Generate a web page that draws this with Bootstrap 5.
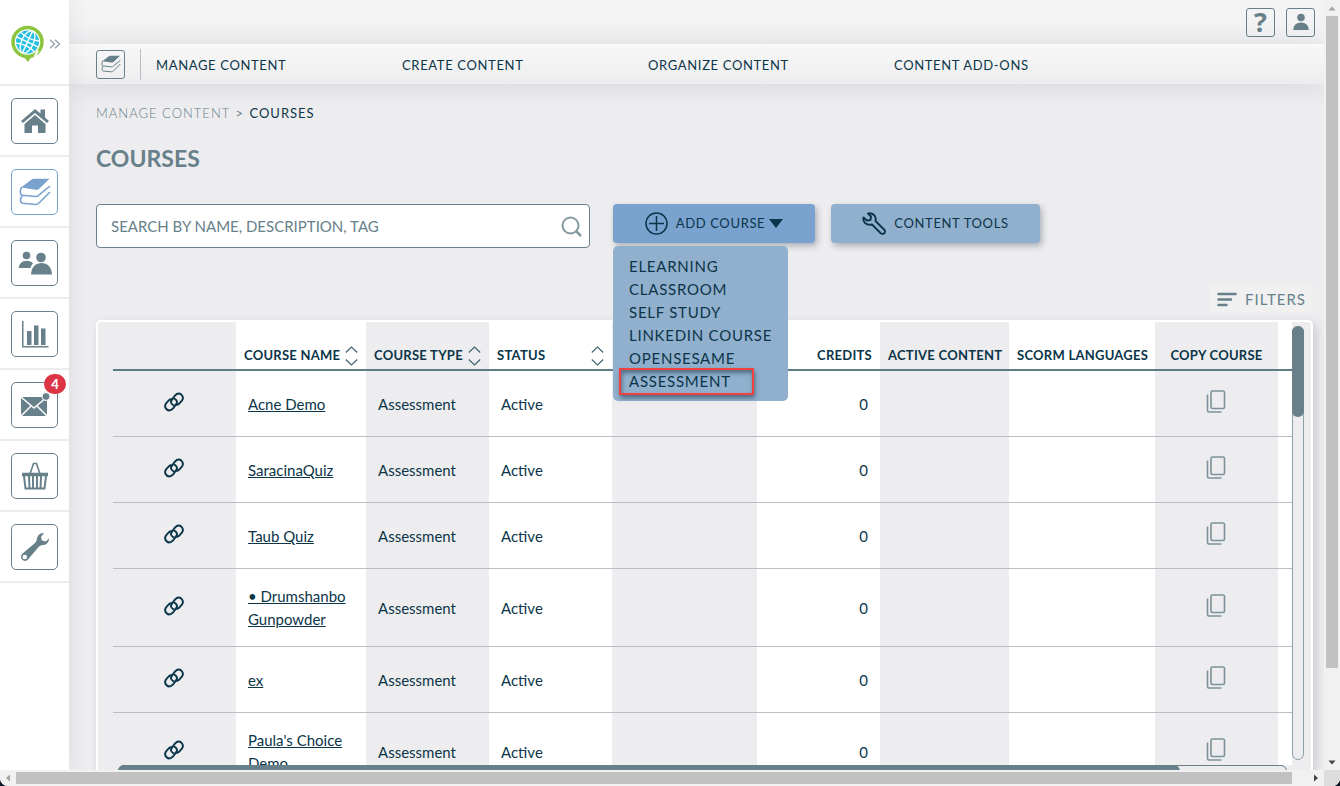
<!DOCTYPE html>
<html lang="en">
<head>
<meta charset="utf-8">
<meta name="viewport" content="width=device-width, initial-scale=1">
<title>Courses</title>
<link href="https://cdn.jsdelivr.net/npm/bootstrap@5.3.0/dist/css/bootstrap.min.css" rel="stylesheet">
<style>
:root { --slate: #67808a; --ink: #0b3548; --page: #ededef; --blue: #79a2ce; --soft: #91b0cd; }
body { font-family: Lato, "Liberation Sans", sans-serif; font-size: 15px; line-height: 23px; color: var(--ink); background: #0d1a2a; }
a { color: inherit; }
.shell { height: 100vh; border-radius: 0 0 8px 8px; background: var(--page); }
.side { width: 69px; background: #fff; box-shadow: 0 0 20px rgba(60,60,80,.09); z-index: 2; }
.brand { height: 86px; border-bottom: 2px solid #ebebed; padding: 0 8px 0 11px; }
.side-item { height: 71px; border-bottom: 2px solid #ededef; }
.tile { width: 47px; height: 46px; border: 1px solid var(--slate); border-radius: 5px; color: var(--slate); background: #fff; padding: 0; }
.tile.current { border-color: var(--blue); color: var(--blue); }
.small-tile { width: 29px; height: 29px; border: 1px solid var(--slate); border-radius: 3px; color: var(--slate); background: transparent; padding: 0; }
.help { font: bold 27px/24px "Open Sans", sans-serif; }
.count { top: -8px; right: -8px; width: 22px; height: 20px; border-radius: 10px; background: #dc3545; color: #fff; font-weight: 900; font-size: 13px; line-height: 20px; }
.utility { height: 44px; padding: 0 9px; gap: 11px; background: linear-gradient(#f4f4f5, #f1f1f3); }
.menu { height: 40px; padding-left: 27px; background: linear-gradient(#f8f8f8, #ededef); box-shadow: 0 2px 24px rgba(60,60,80,.12); font-size: 13px; letter-spacing: .05em; z-index: 1; }
.menu a { flex: 0 1 246px; text-decoration: none; padding-top: 2px; }
.menu .rule { height: 31px; border-left: 1px solid #b9bcc4; margin: 0 15px; }
.content { padding: 0 11px 0 27px; }
.crumbs { font-size: 13px; letter-spacing: 1px; line-height: 20px; margin-top: 19px; }
.crumbs a { font-weight: 300; text-decoration: none; color: var(--slate); }
.crumbs .sep { margin: 0 1px; color: var(--slate); }
h1 { font-size: 23px; line-height: 30px; font-weight: 700; color: var(--slate); margin: 20px 0 31px; }
.find { flex: 0 1 494px; height: 44px; border: 1px solid var(--slate); border-radius: 4px; background: #fff; padding: 0 7px 0 14px; margin-right: 23px; }
.find input { font-size: 15px; color: var(--slate); background: none; }
.find input::placeholder { color: var(--slate); opacity: 1; }
.act { height: 39px; border-radius: 4px; color: var(--ink); font-size: 13px; letter-spacing: .05em; box-shadow: 2px 3px 6px rgba(70,80,100,.4); border: 0; background: var(--soft); }
.act.open { background: var(--blue); width: 202px; }
.act.tools { width: 209px; }
.add-menu { display: block; top: 42px; left: 0; min-width: 175px; background: var(--soft); border: 0; border-radius: 5px; padding: 9px 16px 8px; z-index: 5; }
.add-menu a { display: block; white-space: nowrap; line-height: 23px; letter-spacing: .05em; text-decoration: none; color: var(--ink); }
.picked { position: relative; }
.picked::after { content: ""; position: absolute; inset: -2px 18px -2px -10px; border: 2px solid #f4413f; box-shadow: 1px 3px 4px rgba(20,40,60,.5), inset 1px 3px 4px rgba(20,40,60,.5); }
.filters { height: 26px; background: #f0f0f0; border: 0; color: var(--slate); letter-spacing: 1px; padding: 0 7px; margin: 38px 0 8px; }
.panel { border: 2px solid #fff; border-bottom: 0; border-radius: 5px 5px 0 0; background: var(--page); box-shadow: 3px 4px 10px rgba(60,60,80,.2); padding: 0 7px 0 15px; }
.grid { table-layout: fixed; min-width: 1100px; border-collapse: separate; border-spacing: 0; }
.grid th { height: 49px; vertical-align: bottom; padding: 0 0 2px 8px; border-bottom: 2px solid #5f7c88; font-size: 13px; letter-spacing: .02em; line-height: 23px; white-space: nowrap; }
.grid td { height: 66px; padding: 16px 12px 15px; vertical-align: middle; border-bottom: 1px solid #bcbec7; }
.grid .w { background: #fff; }
.grid .num { text-align: right; }
.grid th.num { padding-right: 8px; }
.grid th.mid { text-align: center; padding-left: 0; }
.grid td.mid { padding: 8px 2px 12px 0; }
.grid td svg { display: block; color: var(--ink); }
.grid td .copy { color: #7c929a; }
.grid button { border: 0; background: none; padding: 0; }
.sort { width: 13px; height: 20px; margin-right: 8px; }
.vbar { width: 12px; margin: 4px 0 5px; border: 1px solid #8ba0a9; border-radius: 6px; }
.vbar span { display: block; height: 91px; margin: -1px; background: var(--slate); border-radius: 6px; }
.hbar { height: 5px; margin: 0 17px 0 5px; overflow: hidden; }
.hbar div { height: 12px; border: 1px solid var(--slate); border-radius: 6px; background: var(--page); }
.hbar span { display: block; width: 91%; height: 12px; margin: -1px; background: var(--slate); border-radius: 6px; }
.scroll-y { width: 16px; background: #f1f1f1; z-index: 3; }
.scroll-y span { width: 12px; height: 84.7%; background: #c1c1c1; }
.scroll-x { height: 16px; background: #f1f1f1; z-index: 4; }
.scroll-x span { height: 12px; width: 98.8%; background: #c1c1c1; }
.corner { width: 16px; background: #dcdcdc; }
</style>
</head>
<body>
<svg width="0" height="0" class="d-none">
  <symbol id="books" viewBox="0 0 32 28"><path d="M12 2Q13.500 .8 15 .8H30.500L20.500 10.500Q19 12 17 11.700L2 9.500Z" fill="currentColor"/><path d="M2.500 9.500Q.8 12 1.500 15.500Q1.800 17 3.500 17.200L16.500 18.500Q18.500 18.500 19.800 17.200L30.500 8.500M3 18Q1 20.500 1.700 23.500Q2 25 4 25.300L16.500 26.500Q18.500 26.500 20 25L30.500 14.500" fill="none" stroke="currentColor" stroke-width="1.600" stroke-linecap="round"/></symbol>
  <symbol id="chain" viewBox="1 1 22 22"><g fill="none" stroke="currentColor" stroke-width="2.100" stroke-linecap="round"><path d="M12.500 8.300Q16.500 10.500 14.800 14L11 19Q7.500 22.800 3.900 20.100Q.8 17 3.300 13.500L6.500 10Q8.300 8.300 10 9.200"/><path d="M11.500 15.700Q7.500 13.500 9.200 10L13 5Q16.500 1.200 20.100 3.900Q23.200 7 20.700 10.500L17.500 14Q15.700 15.700 14 14.800"/></g></symbol>
  <symbol id="copy" viewBox="0 0 20 23"><g fill="none" stroke="currentColor" stroke-width="1.600"><rect x="5" y="1" width="13.500" height="17.500" rx="1.500"/><path d="M1.500 4.500V20.500Q1.500 22 3 22H15.500"/></g></symbol>
  <symbol id="updown" viewBox="0 0 13 20"><path d="M.8 6.500L6.500 1L12.200 6.500M.8 13.500L6.500 19L12.200 13.500" fill="none" stroke="#456370" stroke-width="1.200"/></symbol>
</svg>
<div class="shell d-flex flex-column overflow-hidden">
<div class="d-flex flex-grow-1 overflow-hidden">
  <nav class="side flex-shrink-0 d-flex flex-column position-relative" aria-label="Main">
    <div class="brand d-flex align-items-center justify-content-between pt-1">
      <svg width="33" height="38" viewBox="0 0 33 38"><path d="M12 31L17 37L21 31Z" fill="#8cc63f"/><circle cx="16.500" cy="17" r="14.500" fill="#fff" stroke="#8cc63f" stroke-width="3.500"/><path d="M23.500 32L27 25.500" stroke="#fff" stroke-width="2"/><circle cx="16.500" cy="17" r="11.500" fill="#29bfe0"/><g fill="none" stroke="#fff" stroke-width="1.300" transform="rotate(25 16.500 17)"><path d="M16.500 5V29M4.500 17H28.500M6 11Q16.500 15 27 11M6 23Q16.500 19 27 23"/><ellipse cx="16.500" cy="17" rx="6" ry="12"/></g></svg>
      <svg width="12" height="10" viewBox="0 0 12 10" fill="none" stroke="#8b9aa3" stroke-width="1.200"><path d="M1 .8L5.500 5L1 9.200M6 .8L10.500 5L6 9.200"/></svg>
    </div>
    <div class="side-item d-flex align-items-center justify-content-center"><button class="tile" aria-label="Home"><svg width="30" height="26" viewBox="0 0 30 26" fill="currentColor"><path d="M15 1L1 13L3 15L15 5L27 15L29 13L25 9.500V1.500H20.500V5.500Z"/><path d="M15 7L4.500 16V25H12V17.500H18V25H25.500V16Z"/></svg></button></div>
    <div class="side-item d-flex align-items-center justify-content-center"><button class="tile current" aria-label="Content"><svg width="32" height="28"><use href="#books"/></svg></button></div>
    <div class="side-item d-flex align-items-center justify-content-center"><button class="tile" aria-label="Users"><svg width="34" height="24" viewBox="0 0 34 24" fill="currentColor"><circle cx="8.500" cy="4.500" r="3.800"/><path d="M.5 17Q2 9.700 8.500 9.700Q13 9.700 15 12.500Q13 14 12.500 17Z"/><circle cx="23" cy="6.500" r="4.800"/><path d="M13 23.500C13.500 15.500 18 12 23.500 12S33.500 15.500 34 23.500Z"/></svg></button></div>
    <div class="side-item d-flex align-items-center justify-content-center"><button class="tile" aria-label="Reports"><svg width="28" height="28" viewBox="0 0 28 28" fill="currentColor"><path d="M1 1H2.500V26H27.500V27.500H1ZM6 11H10.500V25H6ZM13 5.500H17.500V25H13ZM20 8.500H24.500V25H20Z"/></svg></button></div>
    <div class="side-item d-flex align-items-center justify-content-center"><div class="position-relative"><button class="tile" aria-label="Messages"><svg width="30" height="25" viewBox="0 0 30 25"><rect x="1" y="5" width="26" height="19" fill="currentColor"/><path d="M1 5L14 16L27 5M1 24L11 14M27 24L17 14" fill="none" stroke="#fff" stroke-width="1.500"/><circle cx="26" cy="4.500" r="4" fill="currentColor" stroke="#fff"/></svg></button><span class="count position-absolute text-center">4</span></div></div>
    <div class="side-item d-flex align-items-center justify-content-center"><button class="tile" aria-label="Shop"><svg width="28" height="28" viewBox="0 0 28 28" fill="none" stroke="currentColor"><path d="M9 12L12.500 1.500H15.500L19 12" stroke-width="1.600"/><path d="M1 12.500H27" stroke-width="3.500"/><path d="M3 14L4.500 26.500H23.500L25 14" stroke-width="2"/><path d="M8 14L8.500 27M12 14V27M16 14V27M20 14L19.500 27" stroke-width="2"/></svg></button></div>
    <div class="side-item d-flex align-items-center justify-content-center"><button class="tile" aria-label="Settings"><svg width="30" height="30" viewBox="0 0 30 30"><path d="M24 1Q18 1 17 6.500Q17 9 15 11L2 22Q0 25 2 27.500Q4.500 30 7.500 28L19 14.500Q21 12.500 24 13Q28.500 12 29.300 6L26 9.500L22 8.500L21 5Z" fill="currentColor"/><circle cx="4.800" cy="25" r="2.300" fill="#fff"/></svg></button></div>
  </nav>
  <div class="flex-grow-1 d-flex flex-column overflow-hidden">
    <header class="utility d-flex align-items-center justify-content-end flex-shrink-0">
      <button class="small-tile help" aria-label="Help">?</button>
      <button class="small-tile d-flex align-items-center justify-content-center" aria-label="Account"><svg width="16" height="18" viewBox="0 0 16 18" fill="currentColor"><circle cx="8" cy="4.500" r="3.800"/><path d="M.3 17Q.5 9.500 8 9.500T15.700 17Z"/></svg></button>
    </header>
    <nav class="menu d-flex align-items-center flex-shrink-0 position-relative" aria-label="Content">
      <button class="small-tile d-flex align-items-center justify-content-center flex-shrink-0" aria-label="Content"><svg width="20" height="18"><use href="#books"/></svg></button>
      <div class="rule"></div>
      <a href="#">MANAGE CONTENT</a><a href="#">CREATE CONTENT</a><a href="#">ORGANIZE CONTENT</a><a href="#">CONTENT ADD-ONS</a>
    </nav>
    <main class="content flex-grow-1 d-flex flex-column overflow-hidden">
      <div class="crumbs"><a href="#">MANAGE CONTENT</a> <span class="sep">&gt;</span> <span>COURSES</span></div>
      <h1>COURSES</h1>
      <div class="d-flex align-items-start">
        <div class="find d-flex align-items-center"><input class="border-0 p-0 flex-grow-1" type="text" aria-label="Search courses" placeholder="SEARCH BY NAME, DESCRIPTION, TAG"><svg width="21" height="21" viewBox="0 0 21 21" fill="none" stroke="#8499a2" stroke-width="2"><circle cx="9.500" cy="9.500" r="8"/><path d="M15.500 15.500L20 20" stroke-width="2.500"/></svg></div>
        <div class="position-relative me-3">
          <button class="act open d-flex align-items-center justify-content-center" aria-expanded="true"><svg class="me-2" width="23" height="23" viewBox="0 0 23 23" fill="none" stroke="currentColor" stroke-width="1.500"><circle cx="11.500" cy="11.500" r="10.500"/><path d="M11.500 4V19M4 11.500H19"/></svg>ADD COURSE<svg class="ms-1" width="14" height="9" viewBox="0 0 14 9"><path d="M0 0H14L7 9Z" fill="currentColor"/></svg></button>
          <div class="add-menu position-absolute"><a href="#">ELEARNING</a><a href="#">CLASSROOM</a><a href="#">SELF STUDY</a><a href="#">LINKEDIN COURSE</a><a href="#">OPENSESAME</a><a href="#" class="picked">ASSESSMENT</a></div>
        </div>
        <button class="act tools d-flex align-items-center justify-content-center"><svg class="me-2" width="24" height="23" viewBox="0 0 24 23" fill="none" stroke="currentColor" stroke-width="1.900" stroke-linejoin="round"><path d="M6 1.500Q9.500 .5 12 3Q14.500 5.500 13.500 9L22.500 18Q23.500 19.500 22.500 21Q21 22.500 19 21.500L10 12.500Q6 13.500 3 11Q.8 8.500 1.500 5.500L5 8.500L8.500 8L9 4.500Z"/></svg>CONTENT TOOLS</button>
      </div>
      <div class="d-flex justify-content-end"><button class="filters d-flex align-items-center"><svg class="me-2" width="20" height="16" viewBox="0 0 20 16" stroke="currentColor" stroke-width="2.500" stroke-linecap="round"><path d="M1.500 3H18.500M1.500 8.500H14M1.500 14H9.500"/></svg>FILTERS</button></div>
      <section class="panel flex-grow-1 d-flex flex-column overflow-hidden" aria-label="Course list">
        <div class="d-flex flex-grow-1 overflow-hidden">
          <div class="flex-grow-1 overflow-hidden">
            <table class="grid w-100">
              <colgroup><col width="123"><col width="130"><col width="123"><col width="123"><col width="145"><col width="123"><col width="129"><col width="146"><col width="123"><col width="14"></colgroup>
              <thead><tr><th></th>
                <th class="w"><div class="d-flex justify-content-between align-items-center">COURSE NAME<svg class="sort"><use href="#updown"/></svg></div></th>
                <th><div class="d-flex justify-content-between align-items-center">COURSE TYPE<svg class="sort"><use href="#updown"/></svg></div></th>
                <th class="w"><div class="d-flex justify-content-between align-items-center">STATUS<svg class="sort"><use href="#updown"/></svg></div></th>
                <th></th><th class="w num">CREDITS</th><th>ACTIVE CONTENT</th><th class="w">SCORM LANGUAGES</th><th class="mid">COPY COURSE</th><th class="w p-0"></th></tr></thead>
              <tbody id="rows"></tbody>
            </table>
          </div>
          <div class="vbar flex-shrink-0"><span></span></div>
        </div>
        <div class="hbar flex-shrink-0"><div><span></span></div></div>
      </section>
    </main>
  </div>
  <div class="scroll-y flex-shrink-0 d-flex flex-column align-items-center">
    <svg width="16" height="16" class="flex-shrink-0"><path d="M4.500 10.500L8 6.500L11.500 10.500Z" fill="#a3a3a3"/></svg><span></span><svg width="16" height="16" class="mt-auto flex-shrink-0"><path d="M4.500 6.500L8 10.500L11.500 6.500Z" fill="#444"/></svg>
  </div>
</div>
<div class="scroll-x flex-shrink-0 d-flex">
  <div class="flex-grow-1 d-flex align-items-center"><svg width="16" height="16" class="flex-shrink-0"><path d="M10 4.500L6 8L10 11.500Z" fill="#a3a3a3"/></svg><div class="flex-grow-1 d-flex"><span></span></div><svg width="16" height="16" class="flex-shrink-0"><path d="M6 4.500L10 8L6 11.500Z" fill="#444"/></svg></div>
  <div class="corner"></div>
</div>
</div>
<script>
const names = ["Acne Demo", "SaracinaQuiz", "Taub Quiz", "• Drumshanbo Gunpowder", "ex", "Paula's Choice Demo"];
document.getElementById("rows").innerHTML = names.map(n => `<tr>
<td class="mid"><button class="d-block mx-auto" aria-label="Copy link"><svg width="20" height="20"><use href="#chain"/></svg></button></td>
<td class="w"><a href="#">${n}</a></td><td>Assessment</td><td class="w">Active</td><td></td><td class="w num">0</td><td></td><td class="w"></td>
<td class="mid"><button class="d-block mx-auto" aria-label="Copy course"><svg class="copy" width="20" height="23"><use href="#copy"/></svg></button></td><td class="w p-0"></td></tr>`).join("");
</script>
<script src="https://cdn.jsdelivr.net/npm/bootstrap@5.3.0/dist/js/bootstrap.bundle.min.js"></script>
</body>
</html>
